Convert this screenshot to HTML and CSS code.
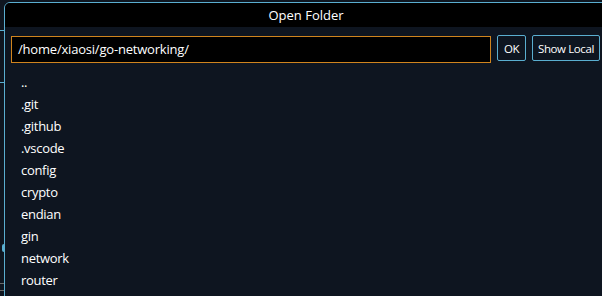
FILE: index.html
```html
<!DOCTYPE html>
<html>
<head>
<meta charset="utf-8">
<link rel="stylesheet" href="styles.css">
</head>
<body>
<div class="backdrop">
  <span class="bg-line bg-line-1"></span>
  <span class="bg-line bg-line-2"></span>
  <span class="bg-dot"></span>
  <span class="bg-grey bg-grey-1"></span>
  <span class="bg-grey bg-grey-2"></span>
</div>
<div class="dialog">
  <div class="titlebar">Open Folder</div>
  <div class="body">
    <div class="toolbar">
      <div class="path-input">/home/xiaosi/go-networking/</div>
      <button class="btn btn-ok">OK</button>
      <button class="btn btn-local">Show Local</button>
    </div>
    <ul class="list">
      <li>..</li>
      <li>.git</li>
      <li>.github</li>
      <li>.vscode</li>
      <li>config</li>
      <li>crypto</li>
      <li>endian</li>
      <li>gin</li>
      <li>network</li>
      <li>router</li>
    </ul>
  </div>
</div>
</body>
</html>
```
FILE: styles.css
```css
html, body {
  margin: 0;
  padding: 0;
  width: 602px;
  height: 296px;
  overflow: hidden;
  background: #0f1620;
  font-family: "Open Sans", "Noto Sans", sans-serif;
  color: #ffffff;
}
body {
  position: relative;
  padding: 2px 0 0 4px;
  box-sizing: border-box;
}
.backdrop {
  position: absolute;
  left: 0;
  top: 0;
  width: 4px;
  height: 296px;
}
.bg-line {
  position: absolute;
  left: 0;
  width: 4px;
  height: 1px;
  background: #5aaed0;
}
.bg-line-1 { top: 30px; }
.bg-line-2 { top: 82px; }
.bg-dot {
  position: absolute;
  left: 2px;
  top: 244px;
  width: 4px;
  height: 8px;
  border-radius: 4px;
  background: #5aaed0;
}
.bg-grey {
  position: absolute;
  left: 0;
  width: 4px;
  height: 1px;
  background: #6a6a6a;
}
.bg-grey-1 { top: 283px; }
.bg-grey-2 { top: 290px; }
.dialog {
  position: relative;
  width: 620px;
  height: 300px;
  border: 1px solid #5aaed0;
  border-radius: 6px;
  background: #0e1520;
  box-sizing: border-box;
  overflow: hidden;
}
.titlebar {
  height: 24px;
  background: #000000;
  font-size: 13px;
  line-height: 24px;
  text-align: center;
  padding-right: 16px;
}
.body {
  padding: 9px 0 0 6px;
}
.toolbar {
  display: flex;
  align-items: flex-start;
  gap: 6px;
}
.path-input {
  width: 480px;
  height: 27px;
  box-sizing: border-box;
  border: 1px solid #d0841e;
  background: #000000;
  font-size: 13px;
  letter-spacing: -0.2px;
  line-height: 25px;
  padding-left: 6px;
}
.btn {
  margin-top: -1px;
  height: 26px;
  box-sizing: border-box;
  border: 1px solid #5aaed0;
  border-radius: 2px;
  background: #0e1520;
  color: #ffffff;
  font-family: inherit;
  font-size: 11.5px;
  letter-spacing: -0.4px;
  padding: 0;
  text-align: center;
}
.btn-ok { width: 29px; }
.btn-local { width: 68px; }
.list {
  list-style: none;
  margin: 8px 0 0 0;
  padding: 0 0 0 10px;
  font-size: 13px;
  letter-spacing: -0.3px;
}
.list li {
  height: 22px;
  line-height: 22px;
}
```
